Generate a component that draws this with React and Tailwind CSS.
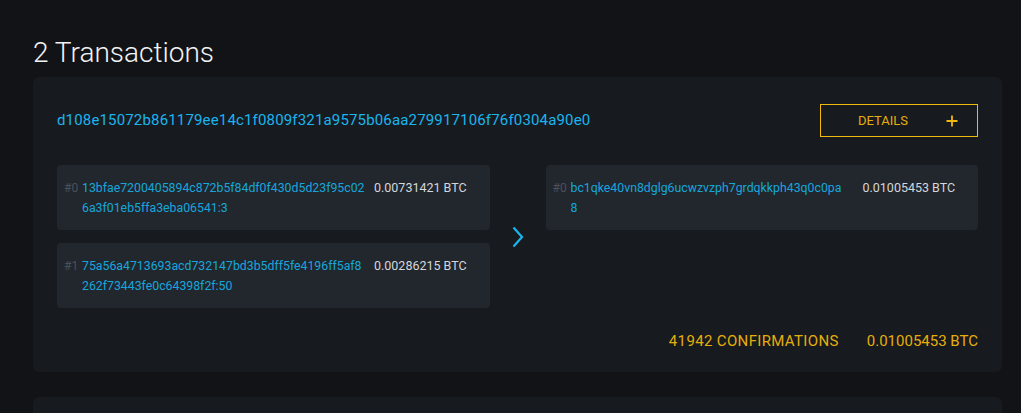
import React from "react";

const font = { fontFamily: "Roboto, 'Noto Sans', sans-serif" };

function Row({ idx, hash, amount, hashW = "w-[284px]", gap = "ml-[8px]" }) {
  return (
    <div className="flex items-start rounded-[4px] bg-[#22262d] pl-[7px] pr-3 pt-[13px] pb-[12px] leading-[20px]">
      <span className="w-[18px] shrink-0 text-[12px] text-[#4b515a]">#{idx}</span>
      <span className={`${hashW} shrink-0 break-all text-[12.3px] text-[#16a6dc]`}>{hash}</span>
      <span className={`${gap} text-[12.5px] text-[#d4d7db]`}>{amount}</span>
    </div>
  );
}

function Card() {
  return (
    <div className="rounded-[6px] bg-[#171a1e] px-6 pt-[27px] pb-[21px]">
      <div className="flex items-center justify-between">
        <span className="text-[15px] tracking-[0.16px] text-[#19b5ee]">
          d108e15072b861179ee14c1f0809f321a9575b06aa279917106f76f0304a90e0
        </span>
        <button className="flex h-[33px] w-[158px] items-center justify-between border border-[#f0b90b] pl-[37px] pr-[19px] text-[13px] text-[#e5ae0c]">
          <span>DETAILS</span>
          <svg width="12" height="12" viewBox="0 0 12 12">
            <path d="M6 0.5V11.5M0.5 6H11.5" stroke="#f0b90b" strokeWidth="1.8" />
          </svg>
        </button>
      </div>
      <div className="mt-[28px] grid grid-cols-[1fr_56px_1fr]">
        <div className="flex flex-col gap-[13px]">
          <Row idx={0} hash="13bfae7200405894c872b5f84df0f430d5d23f95c026a3f01eb5ffa3eba06541:3" amount="0.00731421 BTC" />
          <Row idx={1} hash="75a56a4713693acd732147bd3b5dff5fe4196ff5af8262f73443fe0c64398f2f:50" amount="0.00286215 BTC" />
        </div>
        <div className="flex items-center justify-center">
          <svg width="12" height="22" viewBox="0 0 12 22">
            <path d="M1.5 1.5L10 11L1.5 20.5" stroke="#19b5ee" strokeWidth="2.2" fill="none" />
          </svg>
        </div>
        <div>
          <Row
            idx={0}
            hash="bc1qke40vn8dglg6ucwzvzph7grdqkkph43q0c0pa8"
            amount="0.01005453 BTC"
            hashW="w-[274px]"
            gap="ml-[18px]"
          />
        </div>
      </div>
      <div className="mt-[23px] flex justify-end gap-[28px] text-[15px] leading-[20px] text-[#e5ae0c]">
        <span className="tracking-[0.35px]">41942 CONFIRMATIONS</span>
        <span>0.01005453 BTC</span>
      </div>
    </div>
  );
}

export default function App() {
  return (
    <div className="h-[413px] w-full overflow-hidden bg-[#121316] pl-[33px] pr-[19px]" style={font}>
      <h1 className="pt-[36px] pb-[7px] text-[28px] font-light leading-[34px] text-[#f2f3f5]">2 Transactions</h1>
      <Card />
      <div className="mt-[25px] h-[100px] rounded-[6px] bg-[#171a1e]" />
    </div>
  );
}
